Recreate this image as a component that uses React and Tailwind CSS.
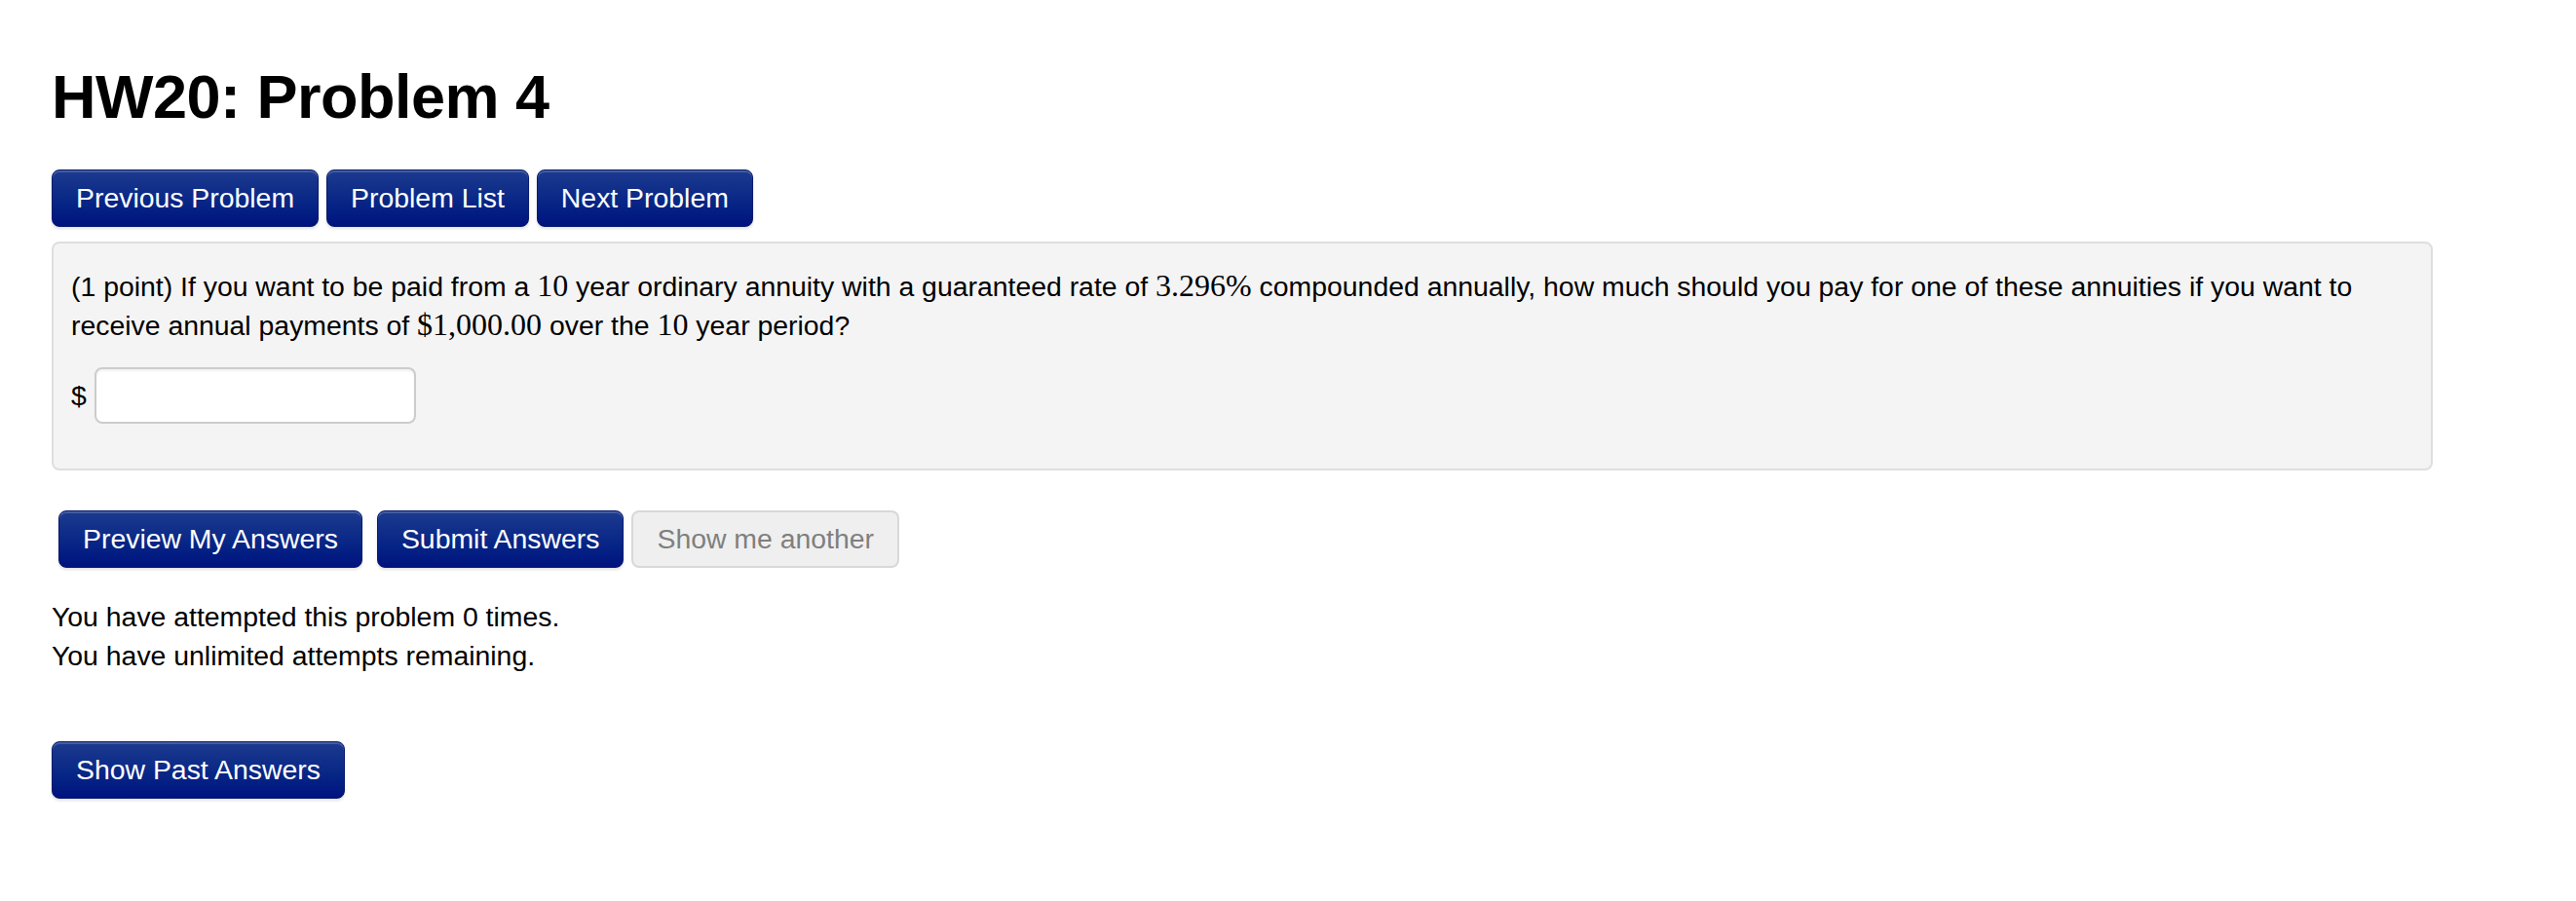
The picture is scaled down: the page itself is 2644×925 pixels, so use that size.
import React from "react";

const navButtons = ["Previous Problem", "Problem List", "Next Problem"];

const btn =
  "rounded-[8px] border border-[#0a1a6e] bg-linear-to-b from-[#1c3a8e] to-[#00117f] px-[24px] py-[8px] text-[28.4px] leading-[41px] text-white shadow-[inset_0_2px_0_rgba(255,255,255,0.18),0_2px_3px_rgba(0,0,0,0.12)]";

// math bits are set in a serif, a touch larger, without growing the line
const M = ({ children }) => (
  <span className="font-['Liberation_Serif',serif] text-[32px] leading-[0]">{children}</span>
);

const App = () => (
  <div className="min-h-screen bg-white pl-[53px] pt-[59px] font-['Liberation_Sans',Arial,sans-serif] text-black">
    {/* TITLE */}
    <h1 className="text-[63px] font-bold leading-[80px] tracking-[-0.5px]">HW20: Problem 4</h1>

    {/* NAV */}
    <div className="mt-[35px] flex gap-[8px]">
      {navButtons.map((label) => (
        <button key={label} className={btn}>
          {label}
        </button>
      ))}
    </div>

    {/* PROBLEM BOX */}
    <div className="mt-[15px] w-[2444px] rounded-[8px] border-2 border-[#dedede] bg-[#f4f4f4] px-[18px] pb-[46px] pt-[24px]">
      <p className="text-[28.4px] leading-[40px]">
        (1 point) If you want to be paid from a <M>10</M> year ordinary annuity with a
        guaranteed rate of <M>3.296%</M> compounded annually, how much should you pay for
        one of these annuities if you want to receive annual payments of <M>$1,000.00</M>{" "}
        over the <M>10</M> year period?
      </p>
      <div className="mt-[23px] flex items-center gap-[8px] text-[28.4px]">
        <span>$</span>
        <input
          type="text"
          className="h-[58px] w-[330px] rounded-[8px] border-2 border-[#cccccc] bg-white px-[10px] text-[28px] shadow-[inset_0_2px_2px_rgba(0,0,0,0.06)] outline-none"
        />
      </div>
    </div>

    {/* ACTIONS */}
    <div className="ml-[7px] mt-[41px] flex">
      <button className={btn}>Preview My Answers</button>
      <button className={`${btn} ml-[15px]`}>Submit Answers</button>
      <button className="ml-[8px] rounded-[8px] border-2 border-[#d8d8d8] bg-[#efefef] px-[24px] py-[7px] text-[28.4px] leading-[41px] text-[#7f7f7f]">
        Show me another
      </button>
    </div>

    <div className="mt-[30px] text-[28.4px] leading-[40px]">
      <p>You have attempted this problem 0 times.</p>
      <p>You have unlimited attempts remaining.</p>
    </div>

    <button className={`${btn} mt-[68px]`}>Show Past Answers</button>
  </div>
);

export default App;
